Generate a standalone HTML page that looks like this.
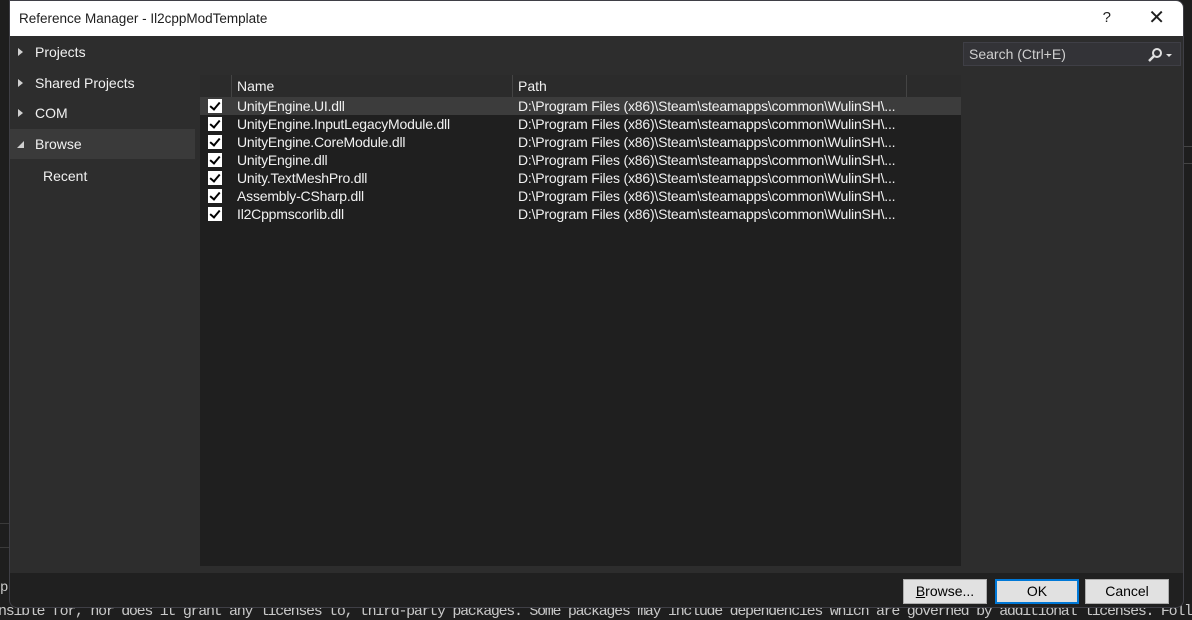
<!DOCTYPE html>
<html><head><meta charset="utf-8"><style>
*{margin:0;padding:0;box-sizing:border-box}
html,body{width:1192px;height:620px;overflow:hidden}
body{background:#1e1e1e;font-family:"Liberation Sans",sans-serif;position:relative;color:#f1f1f1}
.bgwrap{position:absolute;left:0;top:603px;width:1192px;height:17px;overflow:hidden}
.bgtext{position:absolute;left:-2px;top:0;font:15px "Liberation Mono",monospace;color:#c8c8c8;white-space:nowrap;letter-spacing:-1.3px}
.strip{position:absolute;left:0;width:10px;height:1px;background:#3a3a3a}
.dlg{position:absolute;left:9px;top:0;width:1175px;height:608px;background:#2d2d2d;border:1px solid #3f3f46;border-radius:0 8px 8px 8px;overflow:hidden}
.title{position:absolute;left:0;top:0;right:0;height:35px;background:#fff;color:#1e1e1e;font-size:13.5px;padding:10px 0 0 9px}
.title .q{position:absolute;right:72px;top:8px;font-size:15px}
.title .x{position:absolute;right:18px;top:4px;font-size:20px;font-weight:300}
.nav{position:absolute;left:0;width:185px;font-size:14px}
.nav div{height:30.5px;line-height:30px;padding-left:25px;position:relative}
.nav div .t{position:absolute;left:8px;top:11px;width:0;height:0;border-top:4.5px solid transparent;border-bottom:4.5px solid transparent;border-left:5px solid #d0d0d0}
.nav .sel{background:#3a3a3a}
.nav .sel .t{border:none;left:7px;top:12px;border-bottom:7px solid #d0d0d0;border-left:7px solid transparent}
.grid{position:absolute;left:190px;top:74px;width:761px;height:491px;background:#1f1f1f}
.hdr{height:22px;background:#2b2b2b;position:relative;font-size:14px}
.hdr span{position:absolute;top:3px}
.sep{position:absolute;top:0;width:1px;height:22px;background:#444}
.row{height:18px;position:relative;font-size:14px;line-height:18px;letter-spacing:-0.2px}
.row.s{background:#3c3c3c}
.cb{position:absolute;left:8px;top:2px;width:14px;height:14px;background:#fff}
.cb:after{content:"";position:absolute;left:4px;top:1px;width:4px;height:8px;border:solid #000;border-width:0 2px 2px 0;transform:rotate(40deg)}
.n{position:absolute;left:37px}.p{position:absolute;left:318px}
.search{position:absolute;left:953px;top:41px;width:218px;height:24px;background:#333337;border:1px solid #3f3f46;font-size:14px;color:#d0d0d0;padding:3px 0 0 5px}
.foot{position:absolute;left:0;top:572px;right:0;bottom:0;background:#202020}
.btn{position:absolute;top:6px;height:25px;background:#e1e1e1;border:1px solid #adadad;color:#000;font-size:14px;text-align:center;line-height:23px}
</style></head><body>
<div class="bgwrap"><div class="bgtext">nsible for, nor does it grant any licenses to, third-party packages. Some packages may include dependencies which are governed by additional licenses. Follow the package</div></div>
<div class="strip" style="top:523px"></div><div class="strip" style="top:547px"></div>
<div style="position:absolute;left:0;top:580px;font:14px 'Liberation Mono',monospace;color:#ccc">p</div>
<div style="position:absolute;right:0;top:146px;width:8px;height:1px;background:#444"></div>
<div style="position:absolute;right:0;top:163px;width:8px;height:1px;background:#444"></div>
<div class="dlg">
<div class="title">Reference Manager - Il2cppModTemplate<span class="q">?</span><span class="x">✕</span></div>
<div class="nav" style="top:36px">
<div><i class="t"></i>Projects</div>
<div><i class="t"></i>Shared Projects</div>
<div><i class="t"></i>COM</div>
<div class="sel"><i class="t"></i>Browse</div>
<div style="padding-left:33px;height:35px;line-height:35px">Recent</div>
</div>
<div class="grid">
<div class="hdr"><div class="sep" style="left:31px"></div><span style="left:37px">Name</span><div class="sep" style="left:312px"></div><span style="left:318px">Path</span><div class="sep" style="left:706px"></div></div>
<div class="row s"><i class="cb"></i><span class="n">UnityEngine.UI.dll</span><span class="p">D:\Program Files (x86)\Steam\steamapps\common\WulinSH\...</span></div>
<div class="row"><i class="cb"></i><span class="n">UnityEngine.InputLegacyModule.dll</span><span class="p">D:\Program Files (x86)\Steam\steamapps\common\WulinSH\...</span></div>
<div class="row"><i class="cb"></i><span class="n">UnityEngine.CoreModule.dll</span><span class="p">D:\Program Files (x86)\Steam\steamapps\common\WulinSH\...</span></div>
<div class="row"><i class="cb"></i><span class="n">UnityEngine.dll</span><span class="p">D:\Program Files (x86)\Steam\steamapps\common\WulinSH\...</span></div>
<div class="row"><i class="cb"></i><span class="n">Unity.TextMeshPro.dll</span><span class="p">D:\Program Files (x86)\Steam\steamapps\common\WulinSH\...</span></div>
<div class="row"><i class="cb"></i><span class="n">Assembly-CSharp.dll</span><span class="p">D:\Program Files (x86)\Steam\steamapps\common\WulinSH\...</span></div>
<div class="row"><i class="cb"></i><span class="n">Il2Cppmscorlib.dll</span><span class="p">D:\Program Files (x86)\Steam\steamapps\common\WulinSH\...</span></div>
</div>
<div class="search">Search (Ctrl+E)
<svg style="position:absolute;right:6px;top:4px" width="28" height="16" viewBox="0 0 28 16"><circle cx="11" cy="6" r="4" fill="none" stroke="#e0e0e0" stroke-width="2"/><line x1="8" y1="9" x2="3" y2="14" stroke="#e0e0e0" stroke-width="2.5"/><path d="M20 7h6l-3 3z" fill="#e0e0e0"/></svg></div>
<div class="foot">
<div class="btn" style="left:893px;width:84px"><u>B</u>rowse...</div>
<div class="btn" style="left:985px;width:84px;border:2px solid #0078d7;line-height:21px">OK</div>
<div class="btn" style="left:1075px;width:84px">Cancel</div>
</div>
</div>
</body></html>
